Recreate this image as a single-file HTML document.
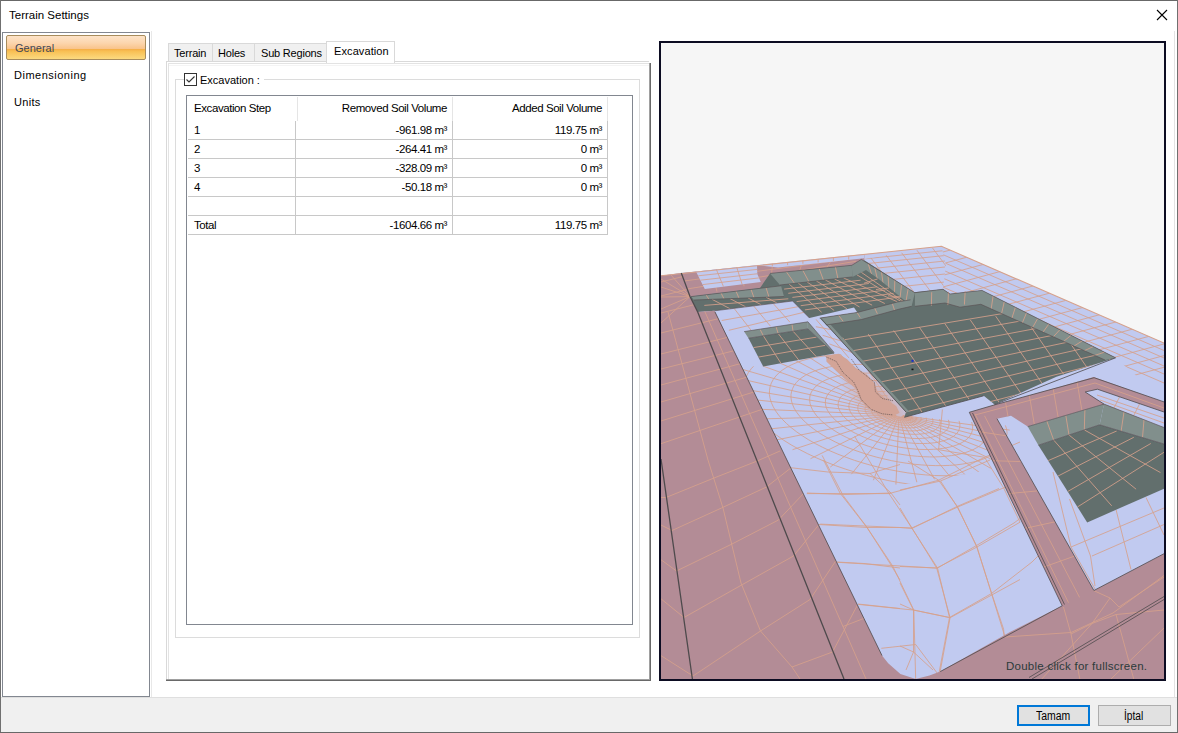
<!DOCTYPE html>
<html><head><meta charset="utf-8">
<style>
*{margin:0;padding:0;box-sizing:border-box}
html,body{width:1178px;height:733px;overflow:hidden;background:#fff;font-family:"Liberation Sans",sans-serif;color:#000}
.a{position:absolute}
.t{position:absolute;white-space:pre;line-height:1}
.ms{font-size:11px;letter-spacing:-0.2px}
#tbl .c{position:absolute;white-space:pre;font-size:11.5px;letter-spacing:-0.42px;line-height:1}
</style></head><body>
<!-- window edges -->
<div class="a" style="left:0;top:0;width:1178px;height:1px;background:#686868"></div>
<div class="a" style="left:0;top:0;width:1px;height:733px;background:#707070"></div>
<div class="a" style="left:1177px;top:0;width:1px;height:733px;background:#707070"></div>
<div class="a" style="left:0;top:732px;width:1178px;height:1px;background:#686868"></div>

<!-- title -->
<div class="t" style="left:9px;top:10px;font-size:11.5px;color:#000">Terrain Settings</div>
<svg class="a" style="left:1156px;top:9px" width="12" height="12" viewBox="0 0 12 12"><path d="M1 1L11 11M11 1L1 11" stroke="#000" stroke-width="1.1"/></svg>

<!-- left panel -->
<div class="a" style="left:2px;top:32px;width:148px;height:665px;border:1px solid #828790;background:#fff"></div>
<div class="a" style="left:6px;top:35px;width:140px;height:25px;border:1px solid #a88c5c;border-radius:2px;background:linear-gradient(#fde3c8 0%,#fcd6ae 30%,#f9c48c 55%,#f5ad45 56%,#f8c156 68%,#fcda80 100%)"></div>
<div class="t" style="left:15px;top:43px;font-size:11px;color:#3e4656">General</div>
<div class="t" style="left:14px;top:70px;font-size:11px;letter-spacing:0.5px">Dimensioning</div>
<div class="t" style="left:14px;top:97px;font-size:11px;letter-spacing:0.3px">Units</div>

<div class="a" style="left:151px;top:31px;width:1px;height:666px;background:#e8e8e8"></div>
<div class="a" style="left:1174px;top:31px;width:1px;height:666px;background:#e3e3e3"></div>

<!-- tabs -->
<div class="a" style="left:168px;top:43px;width:45px;height:19px;background:#f0f0f0;border:1px solid #d9d9d9;border-bottom:none"></div>
<div class="a" style="left:212px;top:43px;width:43px;height:19px;background:#f0f0f0;border:1px solid #d9d9d9;border-bottom:none"></div>
<div class="a" style="left:254px;top:43px;width:73px;height:19px;background:#f0f0f0;border:1px solid #d9d9d9;border-bottom:none"></div>
<div class="a" style="left:166px;top:61px;width:483px;height:1px;background:#d9d9d9"></div>
<div class="a" style="left:326px;top:41px;width:69px;height:22px;background:#fff;border:1px solid #d9d9d9;border-bottom:none"></div>
<div class="t ms" style="left:174px;top:48px">Terrain</div>
<div class="t ms" style="left:218px;top:48px">Holes</div>
<div class="t ms" style="left:261px;top:48px">Sub Regions</div>
<div class="t ms" style="left:334px;top:46px;letter-spacing:0.1px">Excavation</div>

<!-- tab page -->
<div class="a" style="left:166px;top:61px;width:1px;height:620px;background:#d9d9d9"></div>
<div class="a" style="left:168px;top:63px;width:481px;height:1px;background:#e3e3e3"></div>
<div class="a" style="left:168px;top:63px;width:1px;height:616px;background:#e3e3e3"></div>
<div class="a" style="left:169px;top:65px;width:480px;height:1px;background:#f4f4f4"></div>
<div class="a" style="left:649px;top:63px;width:1px;height:617px;background:#a0a0a0"></div>
<div class="a" style="left:650px;top:63px;width:1px;height:618px;background:#696969"></div>
<div class="a" style="left:166px;top:679px;width:484px;height:1px;background:#a0a0a0"></div>
<div class="a" style="left:166px;top:680px;width:485px;height:1px;background:#696969"></div>

<!-- group box -->
<div class="a" style="left:175px;top:79px;width:465px;height:559px;border:1px solid #dcdcdc;border-radius:0"></div>
<div class="a" style="left:184px;top:72px;width:80px;height:14px;background:#fff"></div>
<div class="a" style="left:184px;top:73px;width:13px;height:13px;border:1px solid #333;background:#fff"></div>
<svg class="a" style="left:184px;top:73px" width="13" height="13" viewBox="0 0 13 13"><path d="M2.5 6.5L5 9L10.5 3.5" stroke="#333" stroke-width="1.1" fill="none"/></svg>
<div class="t ms" style="left:200px;top:75px;letter-spacing:0px">Excavation :</div>

<!-- grid -->
<div id="tbl" class="a" style="left:186px;top:95px;width:447px;height:530px;border:1px solid #828790;background:#fff">
<div class="a" style="left:110px;top:1px;width:1px;height:24px;background:#e5e5e5"></div>
<div class="a" style="left:265px;top:1px;width:1px;height:24px;background:#e5e5e5"></div>
<div class="a" style="left:420px;top:1px;width:1px;height:24px;background:#e5e5e5"></div>
<div class="a" style="left:108px;top:25px;width:1px;height:114px;background:#c8c8c8"></div>
<div class="a" style="left:265px;top:25px;width:1px;height:114px;background:#c8c8c8"></div>
<div class="a" style="left:420px;top:25px;width:1px;height:114px;background:#c8c8c8"></div>
<div class="a" style="left:1px;top:43px;width:420px;height:1px;background:#c8c8c8"></div>
<div class="a" style="left:1px;top:62px;width:420px;height:1px;background:#c8c8c8"></div>
<div class="a" style="left:1px;top:81px;width:420px;height:1px;background:#c8c8c8"></div>
<div class="a" style="left:1px;top:100px;width:420px;height:1px;background:#c8c8c8"></div>
<div class="a" style="left:1px;top:119px;width:420px;height:1px;background:#c8c8c8"></div>
<div class="a" style="left:1px;top:138px;width:420px;height:1px;background:#c8c8c8"></div>
<div class="c" style="left:7px;top:7px">Excavation Step</div>
<div class="c" style="right:185px;top:7px">Removed Soil Volume</div>
<div class="c" style="right:30px;top:7px">Added Soil Volume</div>
<div class="c" style="left:7px;top:29px">1</div>
<div class="c" style="right:185px;top:29px">-961.98 m³</div>
<div class="c" style="right:30px;top:29px">119.75 m³</div>
<div class="c" style="left:7px;top:48px">2</div>
<div class="c" style="right:185px;top:48px">-264.41 m³</div>
<div class="c" style="right:30px;top:48px">0 m³</div>
<div class="c" style="left:7px;top:67px">3</div>
<div class="c" style="right:185px;top:67px">-328.09 m³</div>
<div class="c" style="right:30px;top:67px">0 m³</div>
<div class="c" style="left:7px;top:86px">4</div>
<div class="c" style="right:185px;top:86px">-50.18 m³</div>
<div class="c" style="right:30px;top:86px">0 m³</div>
<div class="c" style="left:7px;top:124px">Total</div>
<div class="c" style="right:185px;top:124px">-1604.66 m³</div>
<div class="c" style="right:30px;top:124px">119.75 m³</div>
</div>

<!-- 3D view -->
<div id="view" class="a" style="left:659px;top:41px;width:507px;height:640px;border:2px solid #0c0c22;background:#f6f6f6;overflow:hidden"></div>
<!-- 3D --><svg class="a" style="left:661px;top:43px" width="503" height="636" viewBox="661 43 503 636"><defs><clipPath id="c1"><polygon points="661.0,275.8 681.3,273.1 941.4,246.3 1164.0,343.0 1164.0,679.0 661.0,679.0"/></clipPath><clipPath id="c2"><polygon points="736.0,366.0 763.2,366.5 834.1,353.5 836.1,352.5 862.3,364.0 906.0,412.0 904.3,417.3 983.7,395.8 1010.0,430.0 990.0,470.0 900.0,485.0 800.0,475.0 730.0,400.0"/></clipPath><clipPath id="c3"><polygon points="941.4,246.3 1164.0,343.0 1164.0,400.0 1115.6,357.8 982.0,290.4 950.0,294.0 943.0,289.3 946.0,265.0"/></clipPath><clipPath id="c4"><polygon points="861.0,259.4 941.4,246.3 946.0,265.0 943.0,289.3 914.9,292.7"/></clipPath><clipPath id="c5"><polygon points="681.3,273.1 864.3,254.5 864.3,260.3 851.8,265.3 770.0,273.4 780.0,285.0 760.0,288.0 690.0,296.6"/></clipPath><clipPath id="c6"><polygon points="696.0,271.4 757.0,265.1 757.3,274.0 760.8,282.0 704.8,289.0"/></clipPath><clipPath id="c7"><polygon points="757.0,265.1 864.0,254.1 864.0,258.3 778.0,267.6"/></clipPath><radialGradient id="hz" cx="0.5" cy="0.5" r="0.5"><stop offset="0" stop-color="#d6a595" stop-opacity="0.85"/><stop offset="0.55" stop-color="#d6a595" stop-opacity="0.45"/><stop offset="1" stop-color="#d6a595" stop-opacity="0"/></radialGradient><clipPath id="c8"><polygon points="690.0,296.6 760.0,288.0 770.0,273.4 851.8,265.3 864.3,260.3 914.1,292.2 943.1,289.3 950.0,294.0 982.0,290.4 1115.6,357.8 1056.4,376.8 994.6,404.5 983.7,395.8 904.3,417.3 906.0,412.0 820.6,318.1 857.4,312.4 854.0,307.5 809.5,318.0 792.6,301.0 714.6,310.8 697.7,311.9"/></clipPath><clipPath id="c9"><polygon points="691.0,296.6 781.0,285.8 784.0,296.5 694.0,300.0"/></clipPath><clipPath id="c10"><polygon points="770.0,273.4 851.8,265.3 852.4,276.9 780.0,285.0"/></clipPath><clipPath id="c11"><polygon points="851.8,265.3 861.4,259.4 914.9,292.7 911.6,306.3 880.0,280.0 866.0,270.0 852.4,276.9"/></clipPath><clipPath id="c12"><polygon points="914.9,292.7 936.7,290.0 943.1,289.3 950.0,294.0 982.0,290.4 1115.6,357.8 1105.0,360.0 980.9,304.3 960.0,307.2 945.0,303.0 914.9,306.3"/></clipPath><clipPath id="c13"><polygon points="914.9,292.7 982.0,290.4 980.9,304.3 914.9,306.3"/></clipPath><clipPath id="c14"><polygon points="819.7,318.1 857.4,312.4 897.4,302.0 910.5,299.8 911.6,306.3 899.6,309.0 861.5,319.5 826.0,325.0"/></clipPath><clipPath id="c15"><polygon points="744.1,331.6 807.9,321.8 807.9,328.9 748.5,338.2"/></clipPath><clipPath id="c16"><polygon points="748.5,338.2 807.9,328.9 834.1,353.5 763.2,366.5"/></clipPath><clipPath id="c17"><polygon points="714.6,310.8 792.6,301.0 809.5,318.0 744.1,331.6 728.0,340.0"/></clipPath><clipPath id="c18"><polygon points="807.9,321.8 820.6,318.1 862.3,364.0 836.1,352.5"/></clipPath><clipPath id="c19"><polygon points="661.0,275.8 681.3,273.1 690.0,296.6 697.7,311.9 714.6,310.8 882.0,655.6 888.2,663.2 900.4,674.0 915.7,679.0 661.0,679.0"/></clipPath><clipPath id="c20"><polygon points="969.3,412.3 994.8,404.8 1060.0,386.8 1093.6,377.0 1164.0,401.9 1164.0,426.6 1100.5,405.3 1027.7,426.6 1011.0,415.8 997.0,418.7 1093.9,590.5 1164.0,553.7 1164.0,679.0 915.7,679.0 929.5,675.4 940.2,671.6 1010.0,632.0 1062.2,605.8"/></clipPath><clipPath id="c21"><polygon points="1085.2,392.0 1097.4,389.2 1164.0,412.0 1164.0,427.5 1104.0,404.1"/></clipPath><clipPath id="c22"><polygon points="997.0,418.7 1011.0,415.8 1027.7,426.6 1087.2,522.4 1164.0,488.7 1164.0,553.7 1093.9,590.5"/></clipPath><clipPath id="c23"><polygon points="1027.7,426.6 1104.0,404.1 1099.6,424.8 1038.4,445.2"/></clipPath><clipPath id="c24"><polygon points="1104.0,404.1 1164.0,427.5 1164.0,444.0 1099.6,424.8"/></clipPath><clipPath id="c25"><polygon points="1038.4,445.2 1099.6,424.8 1164.0,444.0 1164.0,488.7 1087.2,522.4"/></clipPath></defs><rect x="661" y="43" width="503" height="636" fill="#f6f6f6"/><polygon points="661.0,275.8 681.3,273.1 941.4,246.3 1164.0,343.0 1164.0,679.0 661.0,679.0" fill="#c1caf0"/><path clip-path="url(#c1)" d="M806.8 493.6 L889.0 493.6 L938.6 480.2 L984.5 457.3 L1020.0 442.0M820.2 524.1 L911.9 528.0 L957.7 507.0 L1003.6 487.9 L1020.0 482.1M837.4 562.3 L936.7 568.1 L976.8 547.1 L1020.0 522.2M858.4 604.4 L913.8 610.1 L950.1 617.7 L992.1 594.8 L1020.0 579.5M881.3 648.3 L915.7 644.5 L938.6 675.0M822.1 455.4 L843.1 495.5 L866.1 526.1 L892.8 566.2 L913.8 610.1 L915.7 680.0M854.6 436.3 L889.0 493.6 L911.9 528.0 L936.7 568.1 L950.1 617.7 L938.6 680.0M908.1 461.1 L938.6 480.2 L957.7 507.0 L976.8 547.1 L992.1 594.8 L1003.6 629.2 L1007.4 680.0M942.4 409.5 L938.6 449.7 L984.5 457.3 L1003.6 487.9 L1020.0 522.2M900.0 490.0 L940.5 481.0 L990.0 460.0M900.0 527.5 L912.0 528.4 L957.0 506.5 L999.0 488.5M900.0 566.5 L937.5 568.0 L976.5 545.5 L1014.0 523.0 L1026.0 514.0M900.0 604.0 L913.5 610.0 L949.5 617.5 L991.5 593.5 L1032.0 562.0 L1044.0 550.0M940.5 481.0 L957.0 506.5 L976.5 545.5 L991.5 593.5 L1005.0 637.0M900.0 508.0 L912.0 528.4 L937.5 568.0 L949.5 617.5 L939.0 673.0M900.0 583.0 L913.5 610.0 L913.5 652.0 L906.0 670.0M900.0 646.0 L913.5 652.0 L933.0 670.0M789.0 467.5 L828.0 472.0 L870.0 473.5 L900.0 464.5M807.0 493.0 L846.0 494.5 L891.0 493.0M819.0 524.5 L867.0 527.5 L900.0 527.5M837.0 562.0 L864.0 563.5 L900.0 568.0M858.0 604.0 L900.0 608.5M823.5 460.0 L840.0 493.0 L867.0 527.5 L891.0 565.0 L900.0 580.0M870.0 473.5 L891.0 493.0 L900.0 505.0" fill="none" stroke="#d6a18b" stroke-width="0.85" stroke-opacity="1"/><path clip-path="url(#c2)" d="M903.8 415.5 L903.9 415.6 L903.9 415.8 L903.9 415.9 L903.9 416.1 L903.8 416.2 L903.8 416.3 L903.7 416.5 L903.5 416.6 L903.4 416.7 L903.2 416.8 L903.1 416.9 L902.9 417.0 L902.6 417.1 L902.4 417.1 L902.1 417.2 L901.9 417.2 L901.6 417.3 L901.3 417.3 L901.0 417.3 L900.7 417.3 L900.3 417.3 L900.0 417.3 L899.7 417.2 L899.3 417.2 L899.0 417.1 L898.6 417.1 L898.3 417.0 L898.0 416.9 L897.6 416.8 L897.3 416.7 L897.0 416.6 L896.7 416.5 L896.4 416.4 L896.1 416.2 L895.8 416.1 L895.6 415.9 L895.3 415.8 L895.1 415.6 L894.9 415.5 L894.7 415.3 L894.6 415.2 L894.4 415.0 L894.3 414.8 L894.2 414.7 L894.2 414.5 L894.1 414.4 L894.1 414.2 L894.1 414.1 L894.1 413.9 L894.2 413.8 L894.2 413.7 L894.3 413.5 L894.5 413.4 L894.6 413.3 L894.8 413.2 L894.9 413.1 L895.1 413.0 L895.4 412.9 L895.6 412.9 L895.9 412.8 L896.1 412.8 L896.4 412.7 L896.7 412.7 L897.0 412.7 L897.3 412.7 L897.7 412.7M907.7 415.9 L907.8 416.1 L907.8 416.4 L907.8 416.7 L907.8 416.9 L907.7 417.2 L907.6 417.4 L907.4 417.7 L907.2 417.9 L906.9 418.1 L906.6 418.3 L906.3 418.4 L906.0 418.6 L905.6 418.7 L905.1 418.8 L904.7 418.9 L904.2 419.0 L903.7 419.1 L903.1 419.1 L902.6 419.1 L902.0 419.1 L901.4 419.1 L900.8 419.1 L900.2 419.0 L899.6 418.9 L899.0 418.8 L898.4 418.7 L897.8 418.6 L897.1 418.4 L896.5 418.3 L896.0 418.1 L895.4 417.9 L894.8 417.7 L894.3 417.4 L893.8 417.2 L893.3 417.0 L892.8 416.7 L892.4 416.4 L892.0 416.2 L891.7 415.9 L891.3 415.6 L891.0 415.3 L890.8 415.0 L890.6 414.7 L890.4 414.4 L890.3 414.1 L890.2 413.9 L890.2 413.6 L890.2 413.3 L890.2 413.1 L890.3 412.8 L890.4 412.6 L890.6 412.3 L890.8 412.1 L891.1 411.9 L891.4 411.7 L891.7 411.6 L892.0 411.4 L892.4 411.3 L892.9 411.2 L893.3 411.1 L893.8 411.0 L894.3 410.9 L894.9 410.9 L895.4 410.9 L896.0 410.9 L896.6 410.9M911.6 416.2 L911.7 416.6 L911.8 417.0 L911.8 417.4 L911.7 417.8 L911.6 418.2 L911.4 418.5 L911.1 418.8 L910.8 419.1 L910.5 419.4 L910.0 419.7 L909.6 420.0 L909.0 420.2 L908.5 420.4 L907.9 420.5 L907.2 420.7 L906.5 420.8 L905.7 420.9 L905.0 421.0 L904.2 421.0 L903.3 421.0 L902.5 421.0 L901.6 420.9 L900.8 420.8 L899.9 420.7 L899.0 420.6 L898.1 420.4 L897.2 420.2 L896.3 420.0 L895.5 419.7 L894.6 419.5 L893.8 419.2 L893.0 418.9 L892.2 418.5 L891.5 418.2 L890.8 417.8 L890.1 417.4 L889.5 417.1 L888.9 416.7 L888.4 416.3 L887.9 415.8 L887.5 415.4 L887.2 415.0 L886.9 414.6 L886.6 414.2 L886.4 413.8 L886.3 413.4 L886.2 413.0 L886.2 412.6 L886.3 412.2 L886.4 411.8 L886.6 411.5 L886.9 411.2 L887.2 410.9 L887.5 410.6 L888.0 410.3 L888.4 410.0 L889.0 409.8 L889.5 409.6 L890.1 409.5 L890.8 409.3 L891.5 409.2 L892.3 409.1 L893.0 409.0 L893.8 409.0 L894.7 409.0 L895.5 409.0M915.9 416.7 L916.1 417.2 L916.2 417.7 L916.2 418.3 L916.1 418.8 L915.9 419.3 L915.7 419.7 L915.3 420.2 L914.9 420.6 L914.4 421.0 L913.9 421.3 L913.2 421.7 L912.5 422.0 L911.8 422.2 L910.9 422.5 L910.0 422.7 L909.1 422.8 L908.1 422.9 L907.0 423.0 L906.0 423.1 L904.8 423.1 L903.7 423.0 L902.5 422.9 L901.4 422.8 L900.2 422.7 L899.0 422.5 L897.8 422.3 L896.6 422.0 L895.4 421.7 L894.2 421.4 L893.1 421.0 L892.0 420.6 L890.9 420.2 L889.9 419.8 L888.9 419.3 L887.9 418.8 L887.0 418.3 L886.2 417.8 L885.4 417.2 L884.7 416.7 L884.1 416.1 L883.5 415.6 L883.1 415.0 L882.6 414.5 L882.3 413.9 L882.1 413.3 L881.9 412.8 L881.8 412.3 L881.8 411.7 L881.9 411.2 L882.1 410.7 L882.3 410.3 L882.7 409.8 L883.1 409.4 L883.6 409.0 L884.1 408.7 L884.8 408.3 L885.5 408.0 L886.2 407.8 L887.1 407.5 L888.0 407.3 L888.9 407.2 L889.9 407.1 L891.0 407.0 L892.0 406.9 L893.2 406.9 L894.3 407.0M920.8 417.1 L921.0 417.8 L921.1 418.5 L921.1 419.2 L921.0 419.8 L920.8 420.5 L920.4 421.1 L920.0 421.6 L919.5 422.2 L918.8 422.7 L918.1 423.1 L917.3 423.6 L916.4 424.0 L915.4 424.3 L914.3 424.6 L913.2 424.8 L912.0 425.0 L910.7 425.2 L909.3 425.3 L908.0 425.4 L906.5 425.4 L905.1 425.3 L903.6 425.2 L902.0 425.1 L900.5 424.9 L899.0 424.6 L897.4 424.3 L895.9 424.0 L894.4 423.6 L892.9 423.2 L891.4 422.7 L890.0 422.2 L888.6 421.7 L887.3 421.1 L886.0 420.5 L884.8 419.9 L883.6 419.2 L882.6 418.6 L881.6 417.9 L880.7 417.2 L879.8 416.5 L879.1 415.8 L878.5 415.0 L878.0 414.3 L877.6 413.6 L877.2 412.9 L877.0 412.2 L876.9 411.5 L876.9 410.8 L877.0 410.2 L877.2 409.5 L877.6 408.9 L878.0 408.4 L878.5 407.8 L879.2 407.3 L879.9 406.9 L880.7 406.4 L881.6 406.0 L882.6 405.7 L883.7 405.4 L884.8 405.2 L886.0 405.0 L887.3 404.8 L888.7 404.7 L890.0 404.6 L891.5 404.6 L892.9 404.7M926.1 417.6 L926.4 418.5 L926.5 419.4 L926.5 420.2 L926.3 421.0 L926.1 421.8 L925.7 422.5 L925.1 423.3 L924.5 423.9 L923.7 424.6 L922.8 425.1 L921.8 425.7 L920.6 426.1 L919.4 426.6 L918.1 426.9 L916.6 427.3 L915.1 427.5 L913.5 427.7 L911.9 427.8 L910.1 427.9 L908.4 427.9 L906.5 427.8 L904.7 427.7 L902.8 427.5 L900.9 427.3 L899.0 427.0 L897.0 426.6 L895.1 426.2 L893.2 425.7 L891.4 425.2 L889.5 424.6 L887.8 424.0 L886.0 423.3 L884.4 422.6 L882.8 421.9 L881.3 421.1 L879.9 420.3 L878.5 419.4 L877.3 418.6 L876.2 417.7 L875.2 416.8 L874.3 415.9 L873.5 415.0 L872.8 414.1 L872.3 413.2 L871.9 412.4 L871.6 411.5 L871.5 410.6 L871.5 409.8 L871.7 409.0 L871.9 408.2 L872.3 407.5 L872.9 406.7 L873.5 406.1 L874.3 405.4 L875.2 404.9 L876.2 404.3 L877.4 403.9 L878.6 403.4 L879.9 403.1 L881.4 402.7 L882.9 402.5 L884.5 402.3 L886.1 402.2 L887.9 402.1 L889.6 402.1 L891.5 402.2M932.4 418.3 L932.7 419.3 L932.9 420.4 L932.9 421.4 L932.7 422.4 L932.4 423.4 L931.9 424.3 L931.2 425.2 L930.4 426.0 L929.4 426.8 L928.3 427.5 L927.1 428.1 L925.7 428.7 L924.1 429.3 L922.5 429.7 L920.7 430.1 L918.9 430.4 L916.9 430.6 L914.9 430.8 L912.7 430.9 L910.5 430.9 L908.3 430.8 L906.0 430.7 L903.7 430.4 L901.3 430.1 L898.9 429.7 L896.6 429.3 L894.2 428.8 L891.9 428.2 L889.6 427.5 L887.4 426.8 L885.2 426.1 L883.0 425.2 L881.0 424.4 L879.0 423.5 L877.2 422.5 L875.4 421.5 L873.8 420.5 L872.3 419.4 L870.9 418.3 L869.6 417.3 L868.5 416.2 L867.6 415.0 L866.8 413.9 L866.1 412.8 L865.6 411.7 L865.3 410.7 L865.1 409.6 L865.1 408.6 L865.3 407.6 L865.6 406.6 L866.1 405.7 L866.8 404.8 L867.6 404.0 L868.6 403.2 L869.7 402.5 L870.9 401.9 L872.3 401.3 L873.9 400.7 L875.5 400.3 L877.3 399.9 L879.1 399.6 L881.1 399.4 L883.1 399.2 L885.3 399.1 L887.5 399.1 L889.7 399.2M939.6 419.0 L940.0 420.3 L940.2 421.6 L940.2 422.8 L940.0 424.0 L939.6 425.2 L939.0 426.3 L938.2 427.4 L937.2 428.4 L936.0 429.3 L934.7 430.2 L933.2 431.0 L931.5 431.7 L929.6 432.4 L927.6 432.9 L925.5 433.4 L923.2 433.8 L920.8 434.0 L918.3 434.2 L915.7 434.3 L913.0 434.3 L910.3 434.2 L907.5 434.1 L904.7 433.8 L901.8 433.4 L898.9 432.9 L896.0 432.4 L893.2 431.8 L890.4 431.1 L887.6 430.3 L884.8 429.4 L882.2 428.5 L879.6 427.5 L877.1 426.4 L874.7 425.3 L872.4 424.1 L870.3 422.9 L868.3 421.7 L866.5 420.4 L864.8 419.1 L863.2 417.7 L861.9 416.4 L860.7 415.1 L859.8 413.7 L859.0 412.4 L858.4 411.0 L858.0 409.7 L857.8 408.4 L857.8 407.2 L858.0 406.0 L858.4 404.8 L859.0 403.7 L859.8 402.6 L860.8 401.6 L862.0 400.7 L863.3 399.8 L864.8 399.0 L866.5 398.3 L868.4 397.6 L870.4 397.1 L872.5 396.6 L874.8 396.2 L877.2 396.0 L879.7 395.8 L882.3 395.7 L885.0 395.7 L887.7 395.8M948.3 419.8 L948.8 421.4 L949.1 423.0 L949.1 424.5 L948.8 426.0 L948.3 427.4 L947.6 428.8 L946.6 430.0 L945.4 431.3 L944.0 432.4 L942.3 433.5 L940.5 434.4 L938.4 435.3 L936.2 436.1 L933.7 436.7 L931.1 437.3 L928.4 437.8 L925.5 438.1 L922.4 438.3 L919.3 438.5 L916.0 438.5 L912.7 438.4 L909.3 438.1 L905.9 437.8 L902.4 437.4 L898.9 436.8 L895.4 436.1 L891.9 435.4 L888.5 434.5 L885.1 433.5 L881.8 432.5 L878.5 431.4 L875.4 430.1 L872.4 428.9 L869.5 427.5 L866.7 426.1 L864.1 424.6 L861.7 423.1 L859.5 421.5 L857.4 419.9 L855.6 418.3 L853.9 416.7 L852.5 415.1 L851.3 413.4 L850.4 411.8 L849.7 410.2 L849.2 408.6 L848.9 407.0 L848.9 405.5 L849.2 404.0 L849.7 402.6 L850.4 401.2 L851.4 400.0 L852.6 398.7 L854.0 397.6 L855.7 396.5 L857.5 395.6 L859.6 394.7 L861.8 393.9 L864.3 393.3 L866.9 392.7 L869.6 392.2 L872.5 391.9 L875.6 391.7 L878.7 391.5 L882.0 391.5 L885.3 391.6M959.0 420.9 L959.6 422.8 L959.9 424.7 L959.8 426.5 L959.5 428.3 L958.9 430.1 L958.1 431.7 L956.9 433.3 L955.4 434.8 L953.7 436.2 L951.7 437.4 L949.4 438.6 L946.9 439.7 L944.2 440.6 L941.2 441.4 L938.1 442.1 L934.7 442.7 L931.2 443.1 L927.5 443.4 L923.7 443.5 L919.7 443.5 L915.7 443.4 L911.6 443.1 L907.4 442.7 L903.1 442.2 L898.9 441.5 L894.6 440.7 L890.4 439.8 L886.2 438.7 L882.1 437.5 L878.1 436.3 L874.1 434.9 L870.3 433.4 L866.6 431.8 L863.1 430.2 L859.8 428.5 L856.6 426.7 L853.7 424.8 L851.0 422.9 L848.5 421.0 L846.2 419.1 L844.2 417.1 L842.5 415.1 L841.1 413.1 L839.9 411.1 L839.0 409.1 L838.4 407.2 L838.1 405.3 L838.2 403.5 L838.5 401.7 L839.1 399.9 L839.9 398.3 L841.1 396.7 L842.6 395.2 L844.3 393.8 L846.3 392.6 L848.6 391.4 L851.1 390.3 L853.8 389.4 L856.8 388.6 L859.9 387.9 L863.3 387.3 L866.8 386.9 L870.5 386.6 L874.3 386.5 L878.3 386.5 L882.3 386.6M971.6 422.1 L972.3 424.4 L972.6 426.7 L972.6 429.0 L972.2 431.1 L971.5 433.2 L970.4 435.2 L969.0 437.1 L967.2 438.9 L965.1 440.6 L962.7 442.2 L960.0 443.6 L957.0 444.9 L953.6 446.0 L950.1 447.0 L946.2 447.8 L942.2 448.5 L937.9 449.0 L933.5 449.3 L928.8 449.5 L924.1 449.5 L919.2 449.4 L914.2 449.0 L909.1 448.5 L904.0 447.9 L898.9 447.1 L893.7 446.1 L888.6 445.0 L883.6 443.7 L878.6 442.3 L873.7 440.7 L868.9 439.1 L864.3 437.3 L859.9 435.4 L855.6 433.4 L851.6 431.3 L847.7 429.1 L844.2 426.9 L840.9 424.6 L837.9 422.3 L835.1 419.9 L832.7 417.5 L830.7 415.1 L828.9 412.7 L827.5 410.3 L826.4 407.9 L825.7 405.6 L825.4 403.3 L825.4 401.0 L825.8 398.9 L826.5 396.8 L827.6 394.8 L829.0 392.9 L830.8 391.1 L832.9 389.4 L835.3 387.8 L838.0 386.4 L841.0 385.1 L844.4 384.0 L847.9 383.0 L851.8 382.2 L855.8 381.5 L860.1 381.0 L864.5 380.7 L869.2 380.5 L873.9 380.5 L878.8 380.6M987.0 423.6 L987.9 426.4 L988.3 429.2 L988.3 431.9 L987.9 434.6 L987.0 437.1 L985.7 439.5 L983.9 441.8 L981.8 444.0 L979.3 446.1 L976.3 447.9 L973.0 449.7 L969.3 451.2 L965.3 452.6 L961.0 453.8 L956.3 454.8 L951.4 455.6 L946.2 456.2 L940.8 456.7 L935.2 456.9 L929.4 456.9 L923.5 456.7 L917.4 456.3 L911.3 455.7 L905.1 454.9 L898.8 453.9 L892.6 452.7 L886.4 451.3 L880.3 449.8 L874.2 448.1 L868.3 446.2 L862.5 444.2 L856.9 442.0 L851.5 439.7 L846.3 437.3 L841.4 434.8 L836.8 432.1 L832.5 429.4 L828.5 426.7 L824.8 423.8 L821.5 420.9 L818.6 418.0 L816.1 415.1 L814.0 412.2 L812.3 409.3 L811.0 406.4 L810.1 403.6 L809.7 400.8 L809.7 398.1 L810.1 395.4 L811.0 392.9 L812.3 390.5 L814.1 388.2 L816.2 386.0 L818.7 383.9 L821.7 382.1 L825.0 380.3 L828.7 378.8 L832.7 377.4 L837.0 376.2 L841.7 375.2 L846.6 374.4 L851.8 373.8 L857.2 373.3 L862.8 373.1 L868.6 373.1 L874.5 373.3M1005.4 425.4 L1006.5 428.8 L1007.0 432.2 L1007.0 435.5 L1006.4 438.7 L1005.3 441.7 L1003.8 444.7 L1001.7 447.4 L999.1 450.1 L996.0 452.5 L992.5 454.8 L988.4 456.9 L984.0 458.8 L979.1 460.5 L973.9 461.9 L968.3 463.1 L962.3 464.1 L956.1 464.9 L949.5 465.4 L942.8 465.6 L935.8 465.6 L928.6 465.4 L921.3 464.9 L913.8 464.2 L906.3 463.2 L898.8 462.0 L891.3 460.6 L883.8 458.9 L876.4 457.1 L869.0 455.0 L861.9 452.7 L854.9 450.3 L848.1 447.7 L841.6 444.9 L835.4 442.0 L829.4 438.9 L823.8 435.7 L818.6 432.5 L813.8 429.1 L809.3 425.7 L805.4 422.2 L801.8 418.7 L798.8 415.1 L796.2 411.6 L794.1 408.1 L792.6 404.6 L791.5 401.2 L791.0 397.8 L791.0 394.5 L791.6 391.3 L792.7 388.3 L794.2 385.3 L796.3 382.6 L798.9 379.9 L802.0 377.5 L805.5 375.2 L809.6 373.1 L814.0 371.2 L818.9 369.5 L824.1 368.1 L829.7 366.9 L835.7 365.9 L841.9 365.1 L848.5 364.6 L855.2 364.4 L862.2 364.4 L869.4 364.6M1026.7 427.5 L1027.9 431.6 L1028.6 435.6 L1028.5 439.6 L1027.9 443.4 L1026.6 447.1 L1024.7 450.6 L1022.2 453.9 L1019.1 457.1 L1015.4 460.1 L1011.1 462.8 L1006.3 465.3 L1001.0 467.6 L995.2 469.6 L988.9 471.3 L982.1 472.8 L975.0 473.9 L967.5 474.8 L959.7 475.4 L951.5 475.7 L943.1 475.7 L934.5 475.5 L925.7 474.9 L916.8 474.0 L907.8 472.9 L898.8 471.4 L889.7 469.7 L880.7 467.7 L871.8 465.5 L863.0 463.0 L854.4 460.3 L846.1 457.3 L837.9 454.2 L830.1 450.9 L822.6 447.3 L815.5 443.7 L808.8 439.9 L802.5 435.9 L796.7 431.9 L791.4 427.8 L786.6 423.6 L782.4 419.4 L778.7 415.2 L775.6 410.9 L773.2 406.7 L771.3 402.5 L770.1 398.4 L769.4 394.4 L769.5 390.4 L770.1 386.6 L771.4 382.9 L773.3 379.4 L775.8 376.1 L778.9 372.9 L782.6 369.9 L786.9 367.2 L791.7 364.7 L797.0 362.4 L802.8 360.4 L809.1 358.7 L815.9 357.2 L823.0 356.1 L830.5 355.2 L838.3 354.6 L846.5 354.3 L854.9 354.3 L863.5 354.5M1051.9 429.9 L1053.3 434.9 L1054.1 439.7 L1054.1 444.4 L1053.3 449.0 L1051.8 453.4 L1049.5 457.6 L1046.5 461.6 L1042.8 465.4 L1038.3 468.9 L1033.2 472.2 L1027.5 475.2 L1021.1 477.9 L1014.1 480.3 L1006.6 482.4 L998.5 484.1 L990.0 485.5 L981.0 486.6 L971.6 487.3 L961.9 487.7 L951.8 487.7 L941.5 487.4 L931.0 486.7 L920.3 485.6 L909.5 484.2 L898.7 482.5 L887.9 480.5 L877.1 478.1 L866.5 475.4 L856.0 472.4 L845.7 469.2 L835.6 465.7 L825.9 461.9 L816.5 457.9 L807.6 453.7 L799.1 449.3 L791.0 444.8 L783.5 440.1 L776.6 435.2 L770.2 430.3 L764.5 425.3 L759.4 420.3 L755.0 415.2 L751.3 410.1 L748.4 405.1 L746.1 400.1 L744.7 395.1 L743.9 390.3 L743.9 385.6 L744.7 381.0 L746.2 376.6 L748.5 372.4 L751.5 368.4 L755.2 364.6 L759.7 361.1 L764.8 357.8 L770.5 354.8 L776.9 352.1 L783.9 349.7 L791.4 347.6 L799.5 345.9 L808.0 344.5 L817.0 343.4 L826.4 342.7 L836.1 342.3 L846.2 342.3 L856.5 342.6M902.9 415.5 L1060.4 437.0M902.9 415.8 L1060.8 446.9M902.9 416.0 L1058.0 456.2M902.7 416.2 L1052.1 464.7M902.5 416.4 L1043.2 472.2M902.2 416.5 L1031.6 478.6M901.9 416.7 L1017.3 483.8M901.5 416.8 L1000.7 487.6M901.0 416.8 L982.2 490.0M900.5 416.8 L962.0 491.0M900.0 416.8 L940.7 490.4M899.5 416.8 L918.5 488.4M898.9 416.7 L895.9 485.0M898.4 416.6 L873.4 480.2M897.8 416.4 L851.4 474.2M897.3 416.3 L830.3 467.0M896.9 416.1 L810.5 458.7M896.4 415.8 L792.5 449.7M896.0 415.6 L776.5 439.9M895.7 415.4 L762.9 429.7M895.4 415.1 L752.0 419.2M895.2 414.8 L744.0 408.6M895.1 414.6 L738.9 398.1M895.1 414.3 L737.0 388.0M895.1 414.1 L738.2 378.3M895.2 413.9 L742.6 369.4M895.4 413.7 L750.0 361.4M895.6 413.5 L760.3 354.5M896.0 413.4 L773.3 348.7M896.3 413.3 L788.7 344.1M896.8 413.2 L806.3 341.0M897.2 413.2 L825.7 339.3M897.7 413.2 L846.5 339.1" fill="none" stroke="#d6a18b" stroke-width="0.85" stroke-opacity="1"/><path clip-path="url(#c3)" d="M970.0 244.7 L800.0 290.6M986.5 251.9 L816.5 297.8M1003.0 259.1 L833.0 305.0M1019.5 266.3 L849.5 312.2M1036.0 273.5 L866.0 319.4M1052.5 280.7 L882.5 326.6M1069.0 287.9 L899.0 333.8M1085.5 295.1 L915.5 341.0M1102.0 302.3 L932.0 348.2M1118.5 309.6 L948.5 355.5M1135.0 316.8 L965.0 362.7M1151.5 324.0 L981.5 369.9M1168.0 331.2 L998.0 377.1M1184.5 338.4 L1014.5 384.3M1201.0 345.6 L1031.0 391.5M1217.5 352.8 L1047.5 398.7M930.0 249.0 L1164.0 350.5M930.0 256.5 L1164.0 358.0M930.0 264.5 L1164.0 366.0M930.0 272.5 L1164.0 374.0M930.0 281.5 L1164.0 383.0" fill="none" stroke="#d6a18b" stroke-width="0.85" stroke-opacity="1"/><path clip-path="url(#c4)" d="M868.0 254.0 L913.0 314.0M884.0 252.3 L929.0 312.3M900.0 250.6 L945.0 310.6M916.0 249.0 L961.0 309.0M932.0 247.3 L977.0 307.3M850.0 260.4 L945.0 250.5M850.0 265.4 L945.0 255.5M850.0 270.9 L945.0 261.0M850.0 276.9 L945.0 267.0M850.0 283.9 L945.0 274.0M850.0 291.9 L945.0 282.0" fill="none" stroke="#d6a18b" stroke-width="0.85" stroke-opacity="1"/><polygon points="681.3,273.1 864.3,254.5 864.3,260.3 851.8,265.3 770.0,273.4 780.0,285.0 760.0,288.0 690.0,296.6" fill="#b38c96"/><path clip-path="url(#c5)" d="M711.5 269.8 L717.0 291.7M742.0 266.7 L744.0 286.3M772.5 263.5 L771.0 281.0M803.0 260.3 L798.0 275.7M833.5 257.2 L825.0 270.3M684.0 281.0 L860.0 257.7M687.0 289.0 L856.0 261.3" fill="none" stroke="#d6a18b" stroke-width="0.85" stroke-opacity="1"/><polygon points="696.0,271.4 757.0,265.1 757.3,274.0 760.8,282.0 704.8,289.0" fill="#c1caf0"/><path clip-path="url(#c6)" d="M716.3 269.3 L723.5 286.7M736.7 267.2 L742.1 284.3M698.2 275.8 L758.0 269.3M700.4 280.2 L758.9 273.6M702.6 284.6 L759.8 277.8" fill="none" stroke="#d6a18b" stroke-width="0.85" stroke-opacity="1"/><polygon points="757.0,265.1 864.0,254.1 864.0,258.3 778.0,267.6" fill="#c1caf0"/><path clip-path="url(#c7)" d="M772.3 263.5 L772.3 266.4M787.6 262.0 L787.6 265.1M802.9 260.4 L802.9 263.7M818.1 258.8 L818.1 262.4M833.4 257.2 L833.4 261.0M848.7 255.7 L848.7 259.7" fill="none" stroke="#d6a18b" stroke-width="0.85" stroke-opacity="1"/><ellipse cx="0" cy="0" rx="50" ry="20" fill="url(#hz)" transform="translate(878,400) rotate(40)"/><polygon points="826.4,355.9 838.4,353.7 847.1,359.2 855.9,367.9 866.8,374.5 874.4,383.2 877.7,391.9 886.4,399.6 896.2,406.1 899.5,412.7 893.0,416.0 879.9,413.8 867.9,408.3 860.2,399.6 855.9,388.7 846.0,379.9 835.1,370.1 826.4,361.4" fill="#d3a497"/><path d="M826.4 357.0 L836.2 361.4 L842.8 372.3 L853.7 382.1 L858.0 390.9 L861.3 399.6 L871.1 409.4 L882.1 413.8 L893.0 414.9 M851.5 359.2 L859.1 370.1 L874.4 382.1 L875.5 391.9 L882.1 398.5 L893.0 400.7" fill="none" stroke="#6e5a58" stroke-width="0.8" stroke-dasharray="1.2 0.8"/><polygon points="690.0,296.6 760.0,288.0 770.0,273.4 851.8,265.3 864.3,260.3 914.1,292.2 943.1,289.3 950.0,294.0 982.0,290.4 1115.6,357.8 1056.4,376.8 994.6,404.5 983.7,395.8 904.3,417.3 906.0,412.0 820.6,318.1 857.4,312.4 854.0,307.5 809.5,318.0 792.6,301.0 714.6,310.8 697.7,311.9" fill="#626f6d"/><path clip-path="url(#c8)" d="M712.0 299.3 L730.2 308.8M730.0 298.6 L745.8 306.9M748.0 297.9 L761.4 304.9M766.0 297.2 L777.0 303.0M704.3 305.4 L788.3 298.8M789.0 284.0 L821.6 312.2M798.1 283.0 L834.2 310.5M807.1 282.0 L846.9 308.8M816.2 280.9 L859.5 307.0M825.2 279.9 L872.1 305.2M834.3 278.9 L884.8 303.5M843.4 277.9 L897.4 301.8M784.1 289.1 L860.6 280.2M788.3 293.3 L868.9 283.5M792.4 297.4 L877.1 286.8M796.6 301.6 L885.3 290.1M800.7 305.7 L893.5 293.4M804.9 309.9 L901.8 296.7M856.7 274.7 L904.0 303.3M861.3 272.3 L908.0 304.7M864.0 283.2 L877.5 279.0M876.0 289.5 L889.0 288.0M888.0 295.8 L900.5 297.0M791.7 344.8 L874.5 464.8M817.2 341.2 L900.0 461.2M842.7 337.7 L925.5 457.7M868.2 334.1 L951.0 454.1M893.7 330.5 L976.5 450.5M919.2 327.0 L1002.0 447.0M944.7 323.4 L1027.5 443.4M970.2 319.8 L1053.0 439.8M995.7 316.2 L1078.5 436.2M1021.2 312.7 L1104.0 432.7M1046.7 309.1 L1129.5 429.1M1072.2 305.5 L1155.0 425.5M1097.7 302.0 L1180.5 422.0M1123.2 298.4 L1206.0 418.4M1148.7 294.8 L1231.5 414.8M845.0 339.6 L1120.0 294.2M845.0 352.1 L1120.0 303.4M845.0 364.6 L1120.0 312.6M845.0 377.1 L1120.0 321.8M845.0 389.6 L1120.0 331.0M845.0 402.1 L1120.0 340.2M845.0 414.6 L1120.0 349.4M845.0 427.1 L1120.0 358.6M845.0 439.6 L1120.0 367.8" fill="none" stroke="#d6a18b" stroke-width="0.85" stroke-opacity="1"/><polygon points="691.0,296.6 781.0,285.8 784.0,296.5 694.0,300.0" fill="#818f8c"/><path clip-path="url(#c9)" d="M706.0 294.8 L709.0 299.4M721.0 293.0 L724.0 298.8M736.0 291.2 L739.0 298.2M751.0 289.4 L754.0 297.7M766.0 287.6 L769.0 297.1" fill="none" stroke="#d6a18b" stroke-width="0.85" stroke-opacity="1"/><polygon points="770.0,273.4 851.8,265.3 852.4,276.9 780.0,285.0" fill="#818f8c"/><path clip-path="url(#c10)" d="M786.4 271.8 L794.5 283.4M802.7 270.2 L809.0 281.8M819.1 268.5 L823.4 280.1M835.4 266.9 L837.9 278.5" fill="none" stroke="#d6a18b" stroke-width="0.85" stroke-opacity="1"/><polygon points="851.8,265.3 861.4,259.4 914.9,292.7 911.6,306.3 880.0,280.0 866.0,270.0 852.4,276.9" fill="#818f8c"/><path clip-path="url(#c11)" d="M868.1 263.6 L871.7 274.5M874.8 267.7 L877.4 279.1M881.5 271.9 L883.1 283.6M888.1 276.0 L888.8 288.1M894.8 280.2 L894.5 292.7M901.5 284.4 L900.2 297.2M908.2 288.5 L905.9 301.8" fill="none" stroke="#d6a18b" stroke-width="0.85" stroke-opacity="1"/><polygon points="914.9,292.7 936.7,290.0 943.1,289.3 950.0,294.0 982.0,290.4 1115.6,357.8 1105.0,360.0 980.9,304.3 960.0,307.2 945.0,303.0 914.9,306.3" fill="#818f8c"/><path clip-path="url(#c12)" d="M993.1 296.0 L991.2 308.9M1004.3 301.6 L1001.6 313.6M1015.4 307.2 L1011.9 318.2M1026.5 312.9 L1022.3 322.9M1037.7 318.5 L1032.6 327.5M1048.8 324.1 L1043.0 332.1M1059.9 329.7 L1053.3 336.8M1071.1 335.3 L1063.6 341.4M1082.2 340.9 L1074.0 346.1M1093.3 346.6 L1084.3 350.7M1104.5 352.2 L1094.7 355.4" fill="none" stroke="#d6a18b" stroke-width="0.85" stroke-opacity="1"/><path clip-path="url(#c13)" d="M931.7 292.1 L931.4 305.8M948.5 291.5 L947.9 305.3M965.2 291.0 L964.4 304.8" fill="none" stroke="#d6a18b" stroke-width="0.85" stroke-opacity="1"/><polygon points="819.7,318.1 857.4,312.4 897.4,302.0 910.5,299.8 911.6,306.3 899.6,309.0 861.5,319.5 826.0,325.0" fill="#818f8c"/><path clip-path="url(#c14)" d="M837.9 314.4 L843.1 321.3M856.0 310.8 L860.2 317.5M874.2 307.1 L877.4 313.8M892.3 303.5 L894.5 310.0" fill="none" stroke="#d6a18b" stroke-width="0.85" stroke-opacity="1"/><polygon points="820.6,318.1 906.0,412.0 909.5,412.0 824.5,318.0" fill="#818f8c"/><polygon points="744.1,331.6 807.9,321.8 807.9,328.9 748.5,338.2" fill="#818f8c"/><path clip-path="url(#c15)" d="M760.0 329.2 L763.4 335.9M776.0 326.7 L778.2 333.5M792.0 324.2 L793.0 331.2" fill="none" stroke="#d6a18b" stroke-width="0.85" stroke-opacity="1"/><polygon points="807.9,321.8 834.1,352.4 834.1,353.5 807.9,328.9" fill="#818f8c"/><polygon points="748.5,338.2 807.9,328.9 834.1,353.5 763.2,366.5" fill="#626f6d"/><path clip-path="url(#c16)" d="M763.4 335.9 L780.9 363.2M778.2 333.5 L798.7 360.0M793.0 331.2 L816.4 356.8M753.4 347.6 L816.6 337.1M758.3 357.1 L825.4 345.3" fill="none" stroke="#d6a18b" stroke-width="0.85" stroke-opacity="1"/><path clip-path="url(#c17)" d="M734.1 308.4 L754.4 334.5M753.6 305.9 L772.8 329.0M773.1 303.4 L791.1 323.5M721.7 320.5 L798.2 306.7M728.9 330.3 L803.9 312.3" fill="none" stroke="#d6a18b" stroke-width="0.85" stroke-opacity="1"/><path clip-path="url(#c18)" d="M814.9 318.1 L849.2 358.2M815.9 326.7 L831.0 329.6M822.6 335.3 L841.5 341.1M829.4 343.9 L851.9 352.5" fill="none" stroke="#d6a18b" stroke-width="0.85" stroke-opacity="1"/><polygon points="661.0,275.8 681.3,273.1 690.0,296.6 697.7,311.9 714.6,310.8 882.0,655.6 888.2,663.2 900.4,674.0 915.7,679.0 661.0,679.0" fill="#b38c96"/><path clip-path="url(#c19)" d="M668.0 312.0 L708.0 460.0 L723.0 508.0 L741.0 583.0 L760.5 631.0 L792.0 667.0 L800.0 679.0M609.0 93.0 L866.0 679.0M661.0 282.0 L920.0 217.2M661.0 296.0 L920.0 231.2M661.0 313.0 L920.0 248.2M661.0 333.0 L920.0 268.2M661.0 354.0 L920.0 289.2M661.0 369.0 L920.0 304.2M661.0 385.0 L920.0 315.3M661.0 402.0 L920.0 327.0M661.0 421.0 L920.0 340.1M661.0 443.7 L920.0 355.7M660.0 497.5 L666.0 497.5 L714.0 478.0 L756.0 461.5 L780.0 451.0M660.0 524.5 L672.0 530.5 L721.5 508.0 L766.5 487.0 L801.0 460.0 L816.0 448.0M660.0 559.0 L676.5 571.0 L732.0 544.0 L778.5 520.0 L804.0 493.0 L828.0 472.0M660.0 598.0 L684.0 617.5 L742.5 584.5 L793.5 556.0 L819.0 524.5 L840.0 505.0M660.0 655.0 L693.0 676.0 L760.5 631.0 L810.0 599.5 L837.0 559.0 L864.0 535.0M792.0 667.0 L832.5 652.0 L858.0 604.0M843.0 626.5 L870.0 616.0M661.0 279.0 L690.0 296.6M661.0 287.0 L690.0 296.6M661.0 297.0 L690.0 296.6M661.0 309.0 L690.0 296.6M661.0 323.0 L690.0 296.6M671.0 275.0 L690.0 296.6" fill="none" stroke="#d6a18b" stroke-width="0.85" stroke-opacity="1"/><polygon points="969.3,412.3 994.8,404.8 1060.0,386.8 1093.6,377.0 1164.0,401.9 1164.0,426.6 1100.5,405.3 1027.7,426.6 1011.0,415.8 997.0,418.7 1093.9,590.5 1164.0,553.7 1164.0,679.0 915.7,679.0 929.5,675.4 940.2,671.6 1010.0,632.0 1062.2,605.8" fill="#b38c96"/><path clip-path="url(#c20)" d="M974.8 413.6 L1068.5 602.7M984.5 415.8 L1079.6 597.4M978.6 431.6 L1006.7 435.9M992.5 460.7 L1021.2 461.6M1008.3 493.6 L1037.7 490.9M1025.0 528.4 L1055.1 521.8M1043.6 567.1 L1074.5 556.1M975.0 415.0 L1095.0 383.0 L1164.0 408.0M1000.0 370.0 L1012.0 440.0M1025.0 370.0 L1037.0 440.0M1050.0 370.0 L1062.0 440.0M1075.0 370.0 L1087.0 440.0M1063.5 607.0 L1071.0 634.0 L1080.0 679.9M1005.0 637.0 L1071.0 632.5 L1113.0 613.0 L1164.0 575.5M1093.5 590.5 L1110.0 598.0 L1092.0 623.5 L1071.0 634.0M1092.0 623.5 L1116.0 614.5 L1164.0 610.0M1110.0 598.0 L1119.0 607.0 L1164.0 577.0M1041.0 679.9 L1092.0 623.5M1116.0 614.5 L1134.0 679.9M1164.0 628.0 L1110.0 679.9" fill="none" stroke="#d6a18b" stroke-width="0.85" stroke-opacity="1"/><polygon points="1085.2,392.0 1097.4,389.2 1164.0,412.0 1164.0,427.5 1104.0,404.1" fill="#c1caf0"/><path clip-path="url(#c21)" d="M1097.0 395.0 L1164.0 418.0M1100.0 400.0 L1164.0 423.0M1120.0 396.0 L1114.0 408.0M1140.0 403.0 L1134.0 415.0" fill="none" stroke="#d6a18b" stroke-width="0.85" stroke-opacity="1"/><path clip-path="url(#c22)" d="M1053.0 472.0 L1071.0 547.0 L1095.0 589.0M1069.5 499.0 L1090.5 556.0 L1095.0 586.0M1116.0 509.5 L1131.0 569.5M1146.0 497.5 L1164.0 535.0M1092.0 556.0 L1164.0 524.5M1071.0 547.0 L1164.0 508.0" fill="none" stroke="#d6a18b" stroke-width="0.85" stroke-opacity="1"/><polygon points="1027.7,426.6 1104.0,404.1 1099.6,424.8 1038.4,445.2" fill="#818f8c"/><path clip-path="url(#c23)" d="M1046.8 421.0 L1053.7 440.1M1065.8 415.4 L1069.0 435.0M1084.9 409.7 L1084.3 429.9" fill="none" stroke="#d6a18b" stroke-width="0.85" stroke-opacity="1"/><polygon points="1104.0,404.1 1164.0,427.5 1164.0,444.0 1099.6,424.8" fill="#818f8c"/><path clip-path="url(#c24)" d="M1124.0 411.9 L1121.1 431.2M1144.0 419.7 L1142.5 437.6" fill="none" stroke="#d6a18b" stroke-width="0.85" stroke-opacity="1"/><polygon points="1038.4,445.2 1099.6,424.8 1164.0,444.0 1164.0,488.7 1087.2,522.4" fill="#626f6d"/><path clip-path="url(#c25)" d="M1053.7 440.1 L1111.7 505.8M1069.0 435.0 L1136.1 489.2M1084.3 429.9 L1160.5 472.6M1048.2 460.6 L1116.7 431.0M1057.9 476.1 L1133.8 437.3M1067.7 491.5 L1150.8 443.5M1077.4 507.0 L1167.9 449.8" fill="none" stroke="#d6a18b" stroke-width="0.85" stroke-opacity="1"/><path d="M1038.4 445.2 L1099.6 424.8 L1164 444 M1027.7 426.6 L1104 404.1 L1164 427.5 M748.5 338.2 L807.9 328.9 L834.1 353.5 M744.1 331.6 L807.9 321.8 L834.1 352.4 M780 285 L852.4 276.9 M770 273.4 L851.8 265.3 L861.4 259.4 L914.9 292.7 L936.7 290 L943.1 289.3 L950 294 L982 290.4 L1115.6 357.8 M914.9 306.3 L945 303 L960 307.2 L980.9 304.3 L1105 360 M694 300 L784 296.5 M691 296.6 L781 285.8 M819.7 318.1 L857.4 312.4 L897.4 302 L910.5 299.8 M826 325 L861.5 319.5 L899.6 309 L911.6 306.3 M714.6 310.8 L792.6 301 L809.5 318" fill="none" stroke="#574c4f" stroke-width="0.7" stroke-opacity="0.85"/><rect x="911.5" y="359.8" width="2" height="2" fill="#1a2ad0"/><rect x="911.5" y="368.6" width="2" height="1.6" fill="#111"/><path d="M661 275.8 L941.4 246.3 L1164 343" fill="none" stroke="#d6a18b" stroke-width="1.1"/><path d="M681.3 273.1 L690 296.6 L697.7 311.9 L844 679 M661 459 L692.4 679" fill="none" stroke="#4e4a4c" stroke-width="1.3"/><path d="M715 312 L882 655.6 M820.6 318.1 L906 412 M940.2 671.6 L1062.2 605.8 M969.3 412.3 L1062.2 605.8 M972.5 413 L1064.5 604.5 M997 418.7 L1093.9 590.5 M1093.9 590.5 L1164 553.7 M1085.2 392 L1097.4 389.2 L1164 412 M1085.2 392 L1104 404.1 M1094.1 377.7 L1164 401.9 M969.3 412.3 L994.8 404.8 L1094.1 377.7 M1029 677.5 L1164 596.5 M1032 679 L1164 599.5 M904.3 417.3 L983.7 395.8 M994.6 404.5 L1115.6 357.8" fill="none" stroke="#4e4a4c" stroke-width="0.8"/></svg><div class="t" style="left:1006px;top:661px;font-size:11.5px;letter-spacing:0.25px;color:#2b3b3b">Double click for fullscreen.</div><!-- /3D -->

<!-- bottom strip -->
<div class="a" style="left:1px;top:697px;width:1176px;height:1px;background:#dfdfdf"></div>
<div class="a" style="left:1px;top:698px;width:1176px;height:34px;background:#f0f0f0"></div>
<div class="a" style="left:1017px;top:705px;width:73px;height:21px;border:2px solid #0078d7;background:#e1e1e1"></div>
<div class="t" style="left:1036px;top:710px;font-size:12px;transform:scaleX(0.87);transform-origin:0 0">Tamam</div>
<div class="a" style="left:1098px;top:705px;width:73px;height:21px;border:1px solid #adadad;background:#e1e1e1"></div>
<div class="t" style="left:1124px;top:710px;font-size:12px;transform:scaleX(0.85);transform-origin:0 0">İptal</div>
</body></html>
